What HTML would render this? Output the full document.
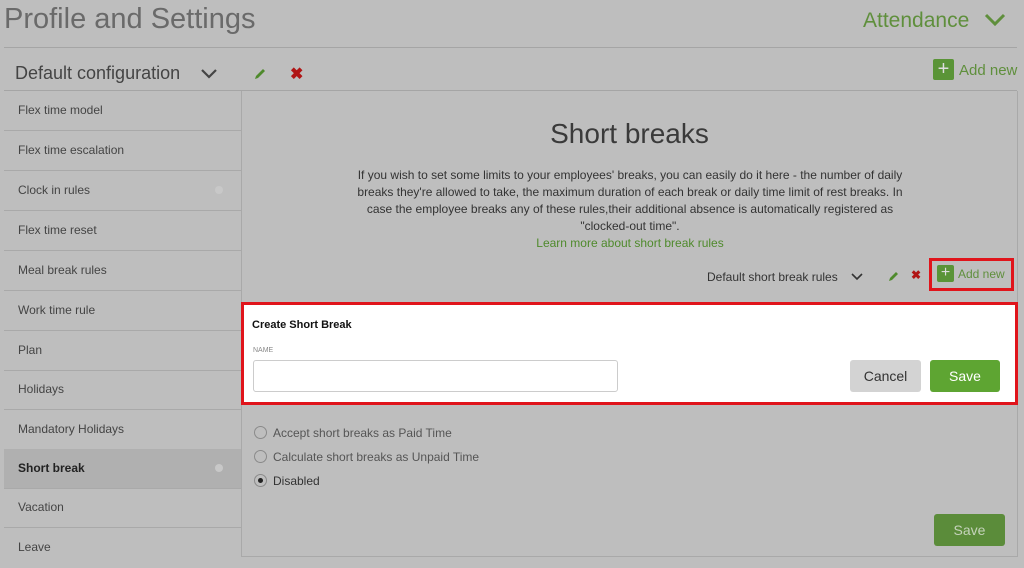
<!DOCTYPE html>
<html><head><meta charset="utf-8"><style>
*{margin:0;padding:0;box-sizing:border-box}
body{width:1024px;height:560px;background:#bebebe;font-family:"Liberation Sans",sans-serif;position:relative;overflow:hidden;color:#3a3a3a}
.a{position:absolute}
.side div{position:absolute;left:4px;width:237px;height:40px;border-bottom:1px solid #a9a9a9;font-size:12px;color:#444;padding:12px 0 0 14px}
.dot{position:absolute;right:18px;top:15px;width:8px;height:8px;border-radius:50%;background:#c8c8c8}
.rad{position:absolute;left:254px;width:13px;height:13px;border:1px solid #8a8a8a;border-radius:50%}
</style></head><body>
<div class="a" style="left:4px;top:3px;font-size:29px;color:#6a6a6a">Profile and Settings</div>
<div class="a" style="left:863px;top:9px;font-size:21px;color:#5f8f3c">Attendance</div>
<svg class="a" style="left:984px;top:12px" width="22" height="16"><path d="M2 3 L11 12 L20 3" stroke="#5f8f3c" stroke-width="3" fill="none"/></svg>
<div class="a" style="left:4px;top:47px;width:1013px;height:1px;background:#a5a5a5"></div>
<div class="a" style="left:15px;top:63px;font-size:18px;color:#444">Default configuration</div>
<svg class="a" style="left:200px;top:68px" width="18" height="12"><path d="M2 2 L9 9 L16 2" stroke="#444" stroke-width="2.2" fill="none"/></svg>
<svg class="a" style="left:253px;top:67px" width="14" height="14"><path d="M2 12 L3 9 L10 2 L12 4 L5 11 Z" fill="#4f8a2c"/></svg>
<div class="a" style="left:290px;top:64px;font-size:16px;font-weight:bold;color:#b01515">✖</div>
<div class="a" style="left:933px;top:59px;width:21px;height:21px;background:#5a9437;border-radius:2px;color:#ddd;font-size:20px;line-height:20px;text-align:center">+</div>
<div class="a" style="left:959px;top:62px;font-size:15px;color:#5f8f3c">Add new</div>
<div class="a" style="left:4px;top:90px;width:1013px;height:1px;background:#a5a5a5"></div>
<div class="side">
<div style="top:91px">Flex time model</div>
<div style="top:131px">Flex time escalation</div>
<div style="top:171px">Clock in rules<span class="dot"></span></div>
<div style="top:211px">Flex time reset</div>
<div style="top:251px">Meal break rules</div>
<div style="top:291px">Work time rule</div>
<div style="top:331px">Plan</div>
<div style="top:370px">Holidays</div>
<div style="top:410px">Mandatory Holidays</div>
<div style="top:449px;background:#b0b0b0;font-weight:bold;color:#222">Short break<span class="dot"></span></div>
<div style="top:488px">Vacation</div>
<div style="top:528px;border:none">Leave</div>
</div>
<div class="a" style="left:241px;top:91px;width:777px;height:466px;border:1px solid #a9a9a9;border-top:none"></div>
<div class="a" style="left:242px;top:118px;width:775px;text-align:center;font-size:28px;color:#3a3a3a">Short breaks</div>
<div class="a" style="left:300px;top:167px;width:660px;text-align:center;font-size:12px;line-height:17px;color:#333;white-space:nowrap">If you wish to set some limits to your employees' breaks, you can easily do it here - the number of daily<br>breaks they're allowed to take, the maximum duration of each break or daily time limit of rest breaks. In<br>case the employee breaks any of these rules,their additional absence is automatically registered as<br>"clocked-out time".<br><span style="color:#4f8a2c">Learn more about short break rules</span></div>
<div class="a" style="left:707px;top:270px;font-size:12px;color:#333">Default short break rules</div>
<svg class="a" style="left:851px;top:272px" width="12" height="9"><path d="M1 2 L6 7 L11 2" stroke="#333" stroke-width="1.6" fill="none"/></svg>
<svg class="a" style="left:888px;top:270px" width="12" height="12"><path d="M1 11 L2 8 L8 2 L10 4 L4 10 Z" fill="#4f8a2c"/></svg>
<div class="a" style="left:911px;top:268px;font-size:12px;font-weight:bold;color:#b01515">✖</div>
<div class="a" style="left:929px;top:258px;width:85px;height:33px;border:3px solid #e0141b"></div>
<div class="a" style="left:937px;top:265px;width:17px;height:17px;background:#5a9437;border-radius:2px;color:#ddd;font-size:16px;line-height:16px;text-align:center">+</div>
<div class="a" style="left:958px;top:267px;font-size:12px;color:#5f8f3c">Add new</div>
<div class="a" style="left:241px;top:302px;width:777px;height:103px;border:3px solid #e0141b;background:#fff"></div>
<div class="a" style="left:252px;top:319px;font-size:11px;font-weight:bold;color:#111">Create Short Break</div>
<div class="a" style="left:253px;top:347px;font-size:7px;color:#888">NAME</div>
<div class="a" style="left:253px;top:360px;width:365px;height:32px;border:1px solid #ccc;border-radius:3px"></div>
<div class="a" style="left:850px;top:360px;width:71px;height:32px;background:#d3d3d3;border-radius:3px;text-align:center;line-height:32px;font-size:14px;color:#333">Cancel</div>
<div class="a" style="left:930px;top:360px;width:70px;height:32px;background:#5ea532;border-radius:3px;text-align:center;line-height:32px;font-size:14px;color:#fff">Save</div>
<div class="rad" style="top:426px"></div>
<div class="a" style="left:273px;top:426px;font-size:12px;color:#555">Accept short breaks as Paid Time</div>
<div class="rad" style="top:450px"></div>
<div class="a" style="left:273px;top:450px;font-size:12px;color:#555">Calculate short breaks as Unpaid Time</div>
<div class="rad" style="top:474px"><div style="width:5px;height:5px;background:#222;border-radius:50%;margin:3px"></div></div>
<div class="a" style="left:273px;top:474px;font-size:12px;color:#333">Disabled</div>
<div class="a" style="left:934px;top:514px;width:71px;height:32px;background:#5b8c3a;border-radius:3px;text-align:center;line-height:32px;font-size:14px;color:#c5d3bb">Save</div>
</body></html>
